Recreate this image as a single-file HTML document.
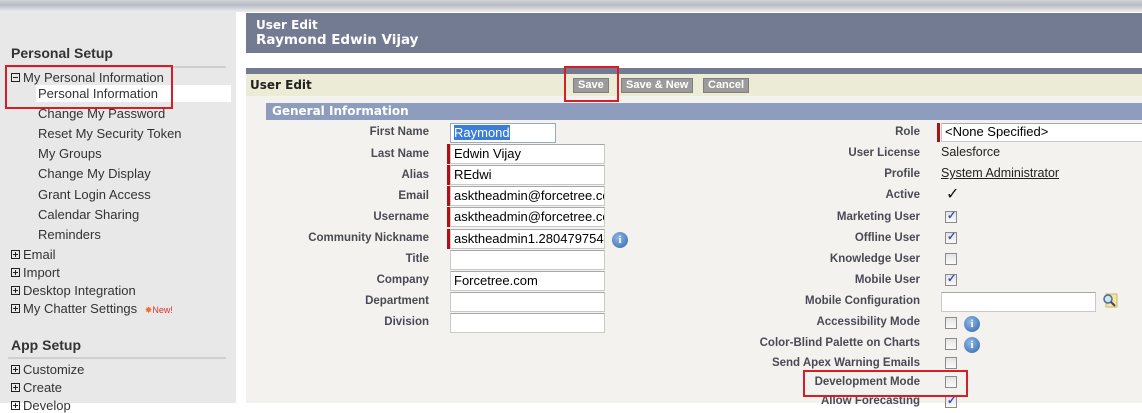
<!DOCTYPE html>
<html><head><meta charset="utf-8"><style>
*{margin:0;padding:0;box-sizing:border-box}
body{width:1142px;height:403px;overflow:hidden;position:relative;background:#fff;font-family:"Liberation Sans",Arial,sans-serif}
.a{position:absolute;white-space:nowrap}
.side{left:0;top:12px;width:236px;height:391px;background:#e8e8e8}
.s{font-size:13px;color:#333}
.hd{font-size:14px;font-weight:bold;color:#333}
.pm{display:inline-block;width:9px;height:9px;border:1px solid #222;position:relative;margin-right:3px;vertical-align:0px}
.pm:before{content:"";position:absolute;left:1px;top:3px;width:5px;height:1px;background:#222}
.pl:after{content:"";position:absolute;left:3px;top:1px;width:1px;height:5px;background:#222}
.lb{font-size:11.5px;font-weight:bold;color:#4a4a56;text-align:right}
.in{height:20px;background:#fff;border:1px solid #c9c9c9;border-top-color:#a8a8a8;font-size:13px;color:#000;padding:1px 3px;overflow:hidden}
.req{width:3px;height:20px;background:#b10f14}
.cb{width:12px;height:12px;border:1px solid #8a8a8a;background:linear-gradient(#e4e4e4,#fafafa)}
.ck:after{content:"✓";position:absolute;left:1px;top:-3px;font-size:11px;color:#3a4cb0;font-weight:bold}
.info{width:16px;height:16px;border-radius:50%;background:radial-gradient(circle at 40% 35%,#8fb7e6,#2e66ad);color:#fff;font-size:11px;font-weight:bold;text-align:center;line-height:16px;font-family:"Liberation Serif",serif}
.btn{height:15px;background:#9b9b9b;border:1px solid #7e7e7e;color:#fff;font-size:11px;font-weight:bold;line-height:13px;padding:0 4px}
.red{border:2px solid #d81d26}
</style></head><body>
<div class="a" style="left:0;top:0;width:1142px;height:12px;background:linear-gradient(#d0d3d8,#b7bcc4 40%,#eceef0)"></div>
<div class="a side"></div>
<div class="a hd" style="left:11px;top:45px">Personal Setup</div>
<div class="a" style="left:8px;top:66px;width:218px;height:2px;background:#cfcfcf"></div>
<div class="a s" style="left:11px;top:70px"><span class="pm"></span>My Personal Information</div>
<div class="a" style="left:36px;top:85px;width:195px;height:17px;background:#fff"></div>
<div class="a s" style="left:38px;top:86px">Personal Information</div>
<div class="a s" style="left:38px;top:106px">Change My Password</div>
<div class="a s" style="left:38px;top:126px">Reset My Security Token</div>
<div class="a s" style="left:38px;top:146px">My Groups</div>
<div class="a s" style="left:38px;top:166px">Change My Display</div>
<div class="a s" style="left:38px;top:187px">Grant Login Access</div>
<div class="a s" style="left:38px;top:207px">Calendar Sharing</div>
<div class="a s" style="left:38px;top:227px">Reminders</div>
<div class="a s" style="left:11px;top:247px"><span class="pm pl"></span>Email</div>
<div class="a s" style="left:11px;top:265px"><span class="pm pl"></span>Import</div>
<div class="a s" style="left:11px;top:283px"><span class="pm pl"></span>Desktop Integration</div>
<div class="a s" style="left:11px;top:301px"><span class="pm pl"></span>My Chatter Settings <span style="color:#e03030;font-size:9px;margin-left:4px"><span style="color:#f07020">✸</span>New!</span></div>
<div class="a hd" style="left:11px;top:337px">App Setup</div>
<div class="a" style="left:8px;top:357px;width:218px;height:2px;background:#cfcfcf"></div>
<div class="a s" style="left:11px;top:362px"><span class="pm pl"></span>Customize</div>
<div class="a s" style="left:11px;top:380px"><span class="pm pl"></span>Create</div>
<div class="a s" style="left:11px;top:398px"><span class="pm pl"></span>Develop</div>
<div class="a red" style="left:5px;top:65px;width:168px;height:44px"></div>

<div class="a" style="left:246px;top:13px;width:896px;height:40px;background:#737b93"></div>
<div class="a" style="left:256px;top:18px;color:#fff;font-size:12px;font-weight:bold;font-family:'DejaVu Sans',sans-serif">User Edit</div>
<div class="a" style="left:256px;top:32px;color:#fff;font-size:13.5px;font-weight:bold;font-family:'DejaVu Sans',sans-serif">Raymond Edwin Vijay</div>
<div class="a" style="left:246px;top:68px;width:896px;height:335px;background:#f3f2ee"></div>
<div class="a" style="left:246px;top:68px;width:896px;height:6px;background:#737b93"></div>
<div class="a" style="left:246px;top:74px;width:896px;height:22px;background:#ecebd6"></div>
<div class="a" style="left:250px;top:78px;font-size:12px;font-weight:bold;color:#222;font-family:'DejaVu Sans',sans-serif">User Edit</div>
<div class="a btn" style="left:573px;top:78px">Save</div>
<div class="a btn" style="left:621px;top:78px">Save &amp; New</div>
<div class="a btn" style="left:703px;top:78px">Cancel</div>
<div class="a red" style="left:564px;top:66px;width:55px;height:36px"></div>
<div class="a" style="left:266px;top:103px;width:876px;height:17px;background:#8e9dbd"></div>
<div class="a" style="left:272px;top:104px;color:#fff;font-size:12px;font-weight:bold;font-family:'DejaVu Sans',sans-serif">General Information</div>

<div class="a lb" style="left:230px;width:199px;top:126px">First Name</div>
<div class="a lb" style="left:230px;width:199px;top:148px">Last Name</div>
<div class="a lb" style="left:230px;width:199px;top:169px">Alias</div>
<div class="a lb" style="left:230px;width:199px;top:190px">Email</div>
<div class="a lb" style="left:230px;width:199px;top:211px">Username</div>
<div class="a lb" style="left:230px;width:199px;top:232px">Community Nickname</div>
<div class="a lb" style="left:230px;width:199px;top:253px">Title</div>
<div class="a lb" style="left:230px;width:199px;top:274px">Company</div>
<div class="a lb" style="left:230px;width:199px;top:295px">Department</div>
<div class="a lb" style="left:230px;width:199px;top:316px">Division</div>

<div class="a in" style="left:450px;top:123px;width:106px;border-color:#9ab"><span style="background:#3b7dd8;color:#fff">Raymond</span></div>
<div class="a req" style="left:447px;top:144px"></div><div class="a in" style="left:450px;top:144px;width:155px">Edwin Vijay</div>
<div class="a req" style="left:447px;top:165px"></div><div class="a in" style="left:450px;top:165px;width:155px">REdwi</div>
<div class="a req" style="left:447px;top:186px"></div><div class="a in" style="left:450px;top:186px;width:155px">asktheadmin@forcetree.com</div>
<div class="a req" style="left:447px;top:207px"></div><div class="a in" style="left:450px;top:207px;width:155px">asktheadmin@forcetree.com</div>
<div class="a req" style="left:447px;top:229px"></div><div class="a in" style="left:450px;top:229px;width:155px">asktheadmin1.2804797545</div>
<div class="a info" style="left:612px;top:232px">i</div>
<div class="a in" style="left:450px;top:250px;width:155px"></div>
<div class="a in" style="left:450px;top:271px;width:155px">Forcetree.com</div>
<div class="a in" style="left:450px;top:292px;width:155px"></div>
<div class="a in" style="left:450px;top:313px;width:155px"></div>

<div class="a lb" style="left:700px;width:220px;top:126px">Role</div>
<div class="a lb" style="left:700px;width:220px;top:147px">User License</div>
<div class="a lb" style="left:700px;width:220px;top:168px">Profile</div>
<div class="a lb" style="left:700px;width:220px;top:189px">Active</div>
<div class="a lb" style="left:700px;width:220px;top:211px">Marketing User</div>
<div class="a lb" style="left:700px;width:220px;top:232px">Offline User</div>
<div class="a lb" style="left:700px;width:220px;top:253px">Knowledge User</div>
<div class="a lb" style="left:700px;width:220px;top:274px">Mobile User</div>
<div class="a lb" style="left:700px;width:220px;top:295px">Mobile Configuration</div>
<div class="a lb" style="left:700px;width:220px;top:316px">Accessibility Mode</div>
<div class="a lb" style="left:700px;width:220px;top:337px">Color-Blind Palette on Charts</div>
<div class="a lb" style="left:700px;width:220px;top:357px">Send Apex Warning Emails</div>
<div class="a lb" style="left:700px;width:220px;top:376px">Development Mode</div>
<div class="a lb" style="left:700px;width:220px;top:395px">Allow Forecasting</div>

<div class="a req" style="left:937px;top:123px;height:19px"></div>
<div class="a in" style="left:941px;top:123px;width:210px;height:19px;padding-top:0">&lt;None Specified&gt;</div>
<div class="a" style="left:941px;top:145px;font-size:12.5px;color:#222">Salesforce</div>
<div class="a" style="left:941px;top:166px;font-size:12.5px;color:#222;text-decoration:underline">System Administrator</div>
<div class="a" style="left:946px;top:184px;font-size:16px;color:#111">✓</div>
<div class="a cb ck" style="left:945px;top:211px"></div>
<div class="a cb ck" style="left:945px;top:232px"></div>
<div class="a cb" style="left:945px;top:253px"></div>
<div class="a cb ck" style="left:945px;top:274px"></div>
<div class="a in" style="left:941px;top:292px;width:155px"></div>
<div class="a" style="left:1102px;top:293px;width:16px;height:16px">
<svg width="16" height="16"><rect x="4" y="1" width="11" height="13" fill="#f3e6a8" stroke="#c9b76a"/><circle cx="6" cy="6" r="4" fill="#cfe3f5" stroke="#4a6d92" stroke-width="1.5"/><line x1="9" y1="9" x2="13" y2="13" stroke="#4a4a4a" stroke-width="2"/></svg></div>
<div class="a cb" style="left:945px;top:317px"></div><div class="a info" style="left:964px;top:316px">i</div>
<div class="a cb" style="left:945px;top:338px"></div><div class="a info" style="left:964px;top:337px">i</div>
<div class="a cb" style="left:945px;top:357px"></div>
<div class="a cb" style="left:945px;top:376px"></div>
<div class="a cb ck" style="left:945px;top:396px"></div>
<div class="a red" style="left:803px;top:370px;width:165px;height:27px"></div>
</body></html>
